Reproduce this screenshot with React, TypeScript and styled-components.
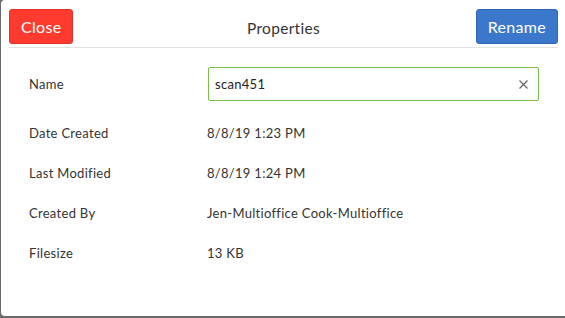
import styled, { createGlobalStyle } from "styled-components";

const GlobalStyle = createGlobalStyle`
  html, body {
    margin: 0;
    padding: 0;
    background: #6b6b6b;
  }
  body {
    font-family: Lato, "Liberation Sans", sans-serif;
  }
`;

const Panel = styled.div`
  width: 564px;
  height: 316px;
  margin-left: 1px;
  background: #fff;
  border-radius: 4px 0 0 4px;
  box-sizing: border-box;
  padding: 9px 7px 0 8px;
`;

const Header = styled.div`
  display: grid;
  grid-template-columns: 1fr auto 1fr;
  align-items: start;
  height: 39px;
  border-bottom: 1px solid #e3e3e3;
  box-sizing: border-box;
`;

const Button = styled.button<{ $tone: "red" | "blue" }>`
  justify-self: ${(p) => (p.$tone === "red" ? "start" : "end")};
  height: 35px;
  padding: 0 11px;
  border-radius: 3px;
  border: 1px solid ${(p) => (p.$tone === "red" ? "#e2302a" : "#2f66b8")};
  background: ${(p) => (p.$tone === "red" ? "#ff3b30" : "#3b78cc")};
  color: #fff;
  font-family: inherit;
  font-size: 16px;
  letter-spacing: 0.3px;
  cursor: pointer;
`;

const Title = styled.div`
  font-size: 15.5px;
  color: #333;
  letter-spacing: 0.3px;
  align-self: center;
`;

const Body = styled.div`
  padding: 18px 19px 0 20px;
  display: flex;
  flex-direction: column;
`;

const Row = styled.div`
  display: grid;
  grid-template-columns: 178px 1fr;
  align-items: center;
  height: 40px;
  font-size: 13px;
  color: #333;
  letter-spacing: 0.3px;
`;

const NameRow = styled(Row)`
  height: 36px;
  margin-bottom: 11px;
`;

const InputBox = styled.div`
  display: flex;
  align-items: center;
  height: 34px;
  width: 331px;
  margin-left: 1px;
  box-sizing: border-box;
  border: 1px solid #7cc24a;
  border-radius: 2px;
  padding: 0 10px 0 6px;
`;

const TextInput = styled.input`
  flex: 1;
  border: none;
  outline: none;
  font-family: inherit;
  font-size: 13px;
  color: #222;
  letter-spacing: 0.3px;
  padding: 0;
  background: transparent;
`;

const ClearIcon = styled.svg`
  width: 9px;
  height: 9px;
  stroke: #666;
  stroke-width: 1.2;
`;

const rows = [
  ["Date Created", "8/8/19 1:23 PM"],
  ["Last Modified", "8/8/19 1:24 PM"],
  ["Created By", "Jen-Multioffice Cook-Multioffice"],
  ["Filesize", "13 KB"],
];

export default function App() {
  return (
    <>
      <GlobalStyle />
      <Panel>
        <Header>
          <Button $tone="red">Close</Button>
          <Title>Properties</Title>
          <Button $tone="blue">Rename</Button>
        </Header>
        <Body>
          <NameRow>
            <span>Name</span>
            <InputBox>
              <TextInput defaultValue="scan451" />
              <ClearIcon viewBox="0 0 9 9">
                <path d="M0.5 0.5 L8.5 8.5 M8.5 0.5 L0.5 8.5" />
              </ClearIcon>
            </InputBox>
          </NameRow>
          {rows.map(([label, value]) => (
            <Row key={label}>
              <span>{label}</span>
              <span>{value}</span>
            </Row>
          ))}
        </Body>
      </Panel>
    </>
  );
}
